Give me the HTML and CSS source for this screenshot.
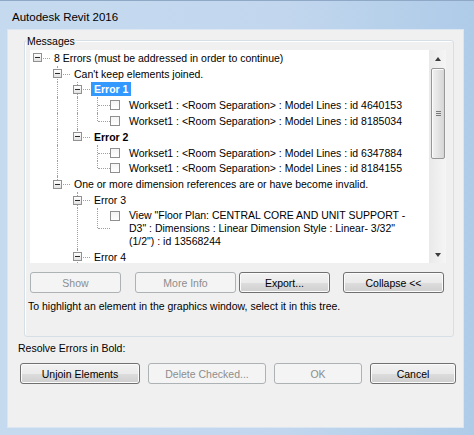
FILE: index.html
```html
<!DOCTYPE html>
<html>
<head>
<meta charset="utf-8">
<link rel="stylesheet" href="styles.css">
</head>
<body>
<div class="window">
  <div class="titlebar"><span class="title">Autodesk Revit 2016</span></div>
  <div class="client">
    <div class="group">
      <span class="group-title">Messages</span>
      <div class="tree">
        <div class="rows">
          <div class="row">
            <span class="c r"><span class="box"></span></span>
            <span class="label">8 Errors (must be addressed in order to continue)</span>
          </div>
          <div class="row">
            <span class="c"></span>
            <span class="c t"><span class="box"></span></span>
            <span class="label">Can't keep elements joined.</span>
          </div>
          <div class="row">
            <span class="c"></span><span class="c v"></span>
            <span class="c t"><span class="box"></span></span>
            <span class="label sel">Error 1</span>
          </div>
          <div class="row">
            <span class="c"></span><span class="c v"></span><span class="c v"></span>
            <span class="c t"></span>
            <span class="cb"></span>
            <span class="label">Workset1 : &lt;Room Separation&gt; : Model Lines : id 4640153</span>
          </div>
          <div class="row">
            <span class="c"></span><span class="c v"></span><span class="c v"></span>
            <span class="c e"></span>
            <span class="cb"></span>
            <span class="label">Workset1 : &lt;Room Separation&gt; : Model Lines : id 8185034</span>
          </div>
          <div class="row">
            <span class="c"></span><span class="c v"></span>
            <span class="c e"><span class="box"></span></span>
            <span class="label bold">Error 2</span>
          </div>
          <div class="row">
            <span class="c"></span><span class="c v"></span><span class="c"></span>
            <span class="c t"></span>
            <span class="cb"></span>
            <span class="label">Workset1 : &lt;Room Separation&gt; : Model Lines : id 6347884</span>
          </div>
          <div class="row">
            <span class="c"></span><span class="c v"></span><span class="c"></span>
            <span class="c e"></span>
            <span class="cb"></span>
            <span class="label">Workset1 : &lt;Room Separation&gt; : Model Lines : id 8184155</span>
          </div>
          <div class="row">
            <span class="c"></span>
            <span class="c e"><span class="box"></span></span>
            <span class="label">One or more dimension references are or have become invalid.</span>
          </div>
          <div class="row">
            <span class="c"></span><span class="c"></span>
            <span class="c t"><span class="box"></span></span>
            <span class="label">Error 3</span>
          </div>
          <div class="row multi">
            <span class="c"></span><span class="c"></span><span class="c v"></span>
            <span class="c e"></span>
            <span class="cb"></span>
            <span class="label">View "Floor Plan: CENTRAL CORE AND UNIT SUPPORT -<br>D3" : Dimensions : Linear Dimension Style : Linear- 3/32"<br>(1/2") : id 13568244</span>
          </div>
          <div class="row">
            <span class="c"></span><span class="c"></span>
            <span class="c t"><span class="box"></span></span>
            <span class="label">Error 4</span>
          </div>
        </div>
        <div class="scrollbar">
          <div class="sb-btn"><span class="arrow up"></span></div>
          <div class="sb-track">
            <div class="thumb"><span class="grip"></span></div>
          </div>
          <div class="sb-btn"><span class="arrow down"></span></div>
        </div>
      </div>
      <div class="btnrow top">
        <button class="btn disabled w-show">Show</button>
        <button class="btn disabled w-more">More Info</button>
        <button class="btn w-export">Export...</button>
        <button class="btn w-collapse">Collapse &lt;&lt;</button>
      </div>
      <p class="hint">To highlight an element in the graphics window, select it in this tree.</p>
    </div>
    <div class="resolve">Resolve Errors in Bold:</div>
    <div class="btnrow bottom">
      <button class="btn w-unjoin">Unjoin Elements</button>
      <button class="btn disabled w-delete">Delete Checked...</button>
      <button class="btn disabled w-ok">OK</button>
      <button class="btn w-cancel">Cancel</button>
    </div>
  </div>
</div>
</body>
</html>
```

FILE: styles.css
```css
html, body {
  margin: 0;
  padding: 0;
  background: #ffffff;
}

.window {
  width: 474px;
  height: 435px;
  box-sizing: border-box;
  padding: 0 11px 8px 8px;
  display: flex;
  flex-direction: column;
  background: linear-gradient(to right, #c6daef 0%, #c2d7ee 60%, #aecbe8 100%);
  border-top: 1px solid #8ea8c6;
  font-family: "Liberation Sans", Arial, sans-serif;
  font-size: 10.5px;
  color: #000;
}

.titlebar {
  height: 29px;
  display: flex;
  align-items: center;
  padding: 3px 0 0 4px;
  box-sizing: border-box;
}

.title {
  font-size: 11.5px;
  color: #000;
}

.client {
  flex: 1;
  background: #f0f0f0;
  display: flex;
  flex-direction: column;
  box-shadow: 0 0 0 1px #dbe6f2;
}

.group {
  margin: 10px 9px 0 16px;
  height: 297px;
  box-sizing: border-box;
  border: 1px solid #d5dfe5;
  border-radius: 3px;
  box-shadow: inset 1px 1px 0 #ffffff;
  display: flex;
  flex-direction: column;
}

.group-title {
  align-self: flex-start;
  margin: -6px 0 0 1px;
  padding: 0 1px;
  line-height: 12px;
  background: #f0f0f0;
}

.tree {
  margin: 3px 7px 0 5px;
  height: 213px;
  display: flex;
  background: #ffffff;
}

.rows {
  flex: 1;
  overflow: hidden;
}

.row {
  display: flex;
  align-items: center;
  height: 15.8px;
}

.row.multi {
  height: 41px;
  align-items: flex-start;
}

.c {
  width: 20px;
  flex: none;
  align-self: stretch;
  position: relative;
  display: flex;
  align-items: center;
}

.c.v::before,
.c.t::before,
.c.e::before {
  content: "";
  position: absolute;
  left: 7px;
  top: 0;
  bottom: 0;
  border-left: 1px dotted #a0a0a0;
}

.c.e::before {
  bottom: 50%;
}

.c.t::after,
.c.e::after,
.c.r::after {
  content: "";
  position: absolute;
  left: 8px;
  right: 0;
  top: 50%;
  border-top: 1px dotted #a0a0a0;
}

.box {
  position: relative;
  z-index: 1;
  width: 9px;
  height: 9px;
  margin-left: 3px;
  box-sizing: border-box;
  border: 1px solid #919191;
  background: linear-gradient(#ffffff, #e2e2e2);
  display: flex;
  align-items: center;
  justify-content: center;
}

.box::after {
  content: "";
  width: 5px;
  height: 1px;
  background: #2a2a2a;
}

.cb {
  flex: none;
  width: 10px;
  height: 10px;
  box-sizing: border-box;
  border: 1px solid #8e8f8f;
  background: linear-gradient(#f4f4f4, #ffffff);
  margin-right: 5px;
}

.row.multi .cb {
  margin-top: 3px;
}

.label {
  white-space: nowrap;
  line-height: 14px;
  padding: 0 3px;
  margin-left: 1px;
}

.row .cb + .label {
  margin-left: 0;
  padding-left: 4px;
}

.row.multi .label {
  line-height: 13px;
  padding-top: 1.5px;
}

.label.sel {
  background: #3399ff;
  color: #ffffff;
  font-weight: bold;
}

.label.bold {
  font-weight: bold;
}

.scrollbar {
  width: 17px;
  flex: none;
  display: flex;
  flex-direction: column;
  background: linear-gradient(to right, #e9e9e9, #f5f5f5);
}

.sb-btn {
  height: 17px;
  flex: none;
  display: flex;
  align-items: center;
  justify-content: center;
}

.arrow {
  width: 0;
  height: 0;
  border-left: 3.5px solid transparent;
  border-right: 3.5px solid transparent;
}

.arrow.up {
  border-bottom: 4px solid #3c3c3c;
}

.arrow.down {
  border-top: 4px solid #3c3c3c;
}

.sb-track {
  flex: 1;
  display: flex;
  flex-direction: column;
}

.thumb {
  margin: 1px 1px 0 2px;
  height: 91px;
  box-sizing: border-box;
  border: 1px solid #979797;
  border-radius: 2px;
  background: linear-gradient(to right, #f1f1f1, #e4e4e4 50%, #d6d6d6);
  box-shadow: inset 1px 1px 0 #fbfbfb;
  display: flex;
  align-items: center;
  justify-content: center;
}

.grip {
  width: 5px;
  height: 5px;
  background: repeating-linear-gradient(#7a7a7a 0 1px, transparent 1px 2px);
}

.btnrow {
  display: flex;
}

.btnrow.top {
  margin: 9px 0 0 5px;
}

.btnrow.bottom {
  margin: 9px 0 0 12px;
  gap: 8px;
}

.btn {
  height: 21px;
  box-sizing: border-box;
  margin: 0;
  padding: 0;
  border: 1px solid #707070;
  border-radius: 3px;
  background: linear-gradient(#f2f2f2 0%, #ebebeb 50%, #dddddd 51%, #cfcfcf 100%);
  box-shadow: inset 0 0 0 1px #fbfbfb;
  font-family: "Liberation Sans", Arial, sans-serif;
  font-size: 10.5px;
  color: #000;
  text-align: center;
}

.btn.disabled {
  border-color: #adb2b5;
  background: #f4f4f4;
  box-shadow: none;
  color: #8d8d8d;
}

.w-show { width: 91px; }
.w-more { width: 101px; margin-left: 14px; }
.w-export { width: 91px; margin-left: 3px; }
.w-collapse { width: 101px; margin-left: 13px; }

.w-unjoin { width: 120px; }
.w-delete { width: 118px; }
.w-ok { width: 88px; }
.w-cancel { width: 86px; }

.hint {
  margin: 7px 0 0 3px;
  line-height: 12px;
}

.resolve {
  margin: 5px 0 0 10px;
  line-height: 12px;
}
```
